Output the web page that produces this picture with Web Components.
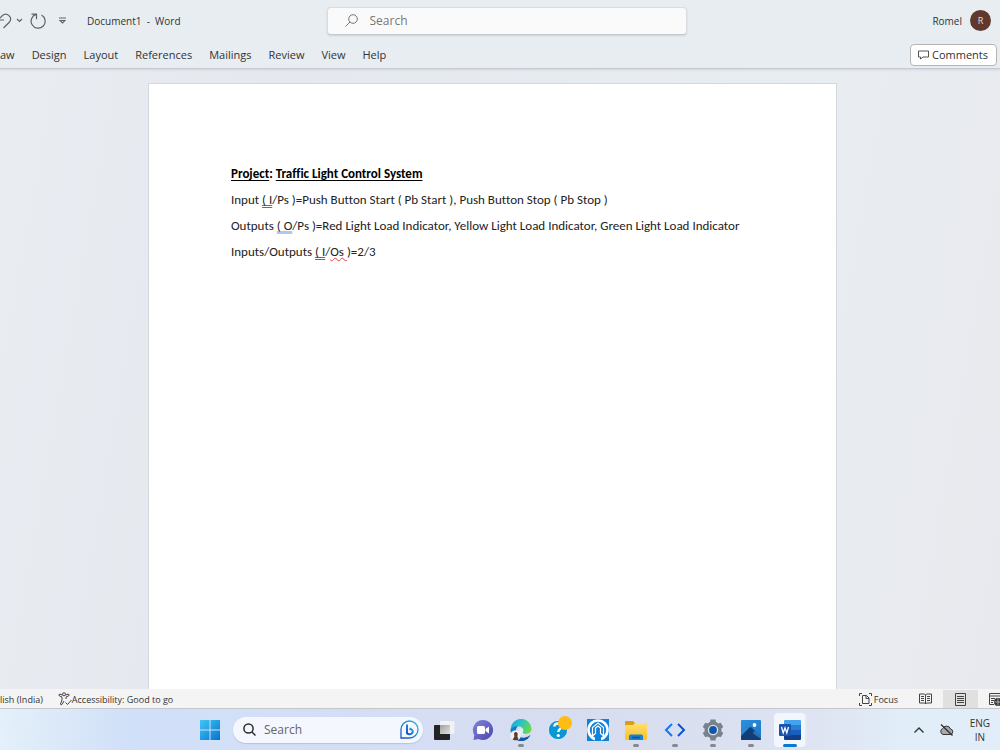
<!DOCTYPE html>
<html lang="en">
<head>
<meta charset="utf-8">
<title>Document1 - Word</title>
<style>
  * { box-sizing: border-box; }
  body {
    margin: 0;
    height: 100vh;
    display: flex;
    flex-direction: column;
    overflow: hidden;
    font-family: "Open Sans", "Noto Sans", sans-serif;
    font-size: 11px;
    color: #333;
    background: #e8ecf1;
  }
  word-workspace { flex: 1; min-height: 0; }
</style>
</head>
<body>

<word-titlebar user="Romel">Document1&nbsp; -&nbsp; Word</word-titlebar>

<word-ribbon>
  <ribbon-tab>aw</ribbon-tab>
  <ribbon-tab>Design</ribbon-tab>
  <ribbon-tab>Layout</ribbon-tab>
  <ribbon-tab>References</ribbon-tab>
  <ribbon-tab>Mailings</ribbon-tab>
  <ribbon-tab>Review</ribbon-tab>
  <ribbon-tab>View</ribbon-tab>
  <ribbon-tab>Help</ribbon-tab>
</word-ribbon>

<word-workspace>
  <doc-line heading><u>Project</u>: <u>Traffic Light Control System</u></doc-line>
  <doc-line>Input <doc-mark kind="grammar">( I</doc-mark>/Ps )=Push Button Start ( Pb Start ), Push Button Stop ( Pb Stop )</doc-line>
  <doc-line>Outputs <doc-mark kind="active">( O</doc-mark>/Ps )=Red Light Load Indicator, Yellow Light Load Indicator, Green Light Load Indicator</doc-line>
  <doc-line>Inputs/Outputs <doc-mark kind="grammar">( I</doc-mark>/<doc-mark kind="spelling">Os </doc-mark>)=2/3</doc-line>
</word-workspace>

<word-statusbar></word-statusbar>

<win-taskbar>
  <task-app label="Task view">
    <svg width="22" height="22" viewBox="0 0 22 22"><defs><linearGradient id="tv" x1="0" y1="0" x2="1" y2="1"><stop offset="0" stop-color="#9f9f9f"/><stop offset="1" stop-color="#e2e2e2"/></linearGradient></defs><rect x="1" y="6" width="16" height="15" rx="1" fill="#242424"/><path d="M7 2h13.500q1 0 1 1v11q0 1-1 1H7z" fill="#f2f2f2"/><path d="M7 6h10v9H7z" fill="url(#tv)"/></svg>
  </task-app>
  <task-app label="Chat">
    <svg width="22" height="22" viewBox="0 0 22 22"><defs><linearGradient id="ch" x1="0" y1="0" x2="1" y2="1"><stop offset="0" stop-color="#8385dc"/><stop offset="1" stop-color="#4d46ad"/></linearGradient></defs><path d="M11 1a10 10 0 1 1-4.500 18.900L1.500 21l.8-5A10 10 0 0 1 11 1z" fill="url(#ch)"/><rect x="5" y="7" width="8" height="8" rx="1.500" fill="#fff"/><path d="M13.500 10 17 7.500v7L13.500 12z" fill="#fff"/></svg>
  </task-app>
  <task-app label="Microsoft Edge" running>
    <svg width="22" height="22" viewBox="0 0 22 22"><defs><linearGradient id="e1" x1="0" y1="0" x2="1" y2=".4"><stop offset="0" stop-color="#1f9de5"/><stop offset=".5" stop-color="#2ac3c6"/><stop offset="1" stop-color="#65d950"/></linearGradient><linearGradient id="e2" x1="0" y1="0" x2="1" y2="1"><stop offset="0" stop-color="#1686d2"/><stop offset="1" stop-color="#114a95"/></linearGradient></defs><path d="M.6 10A10.500 10.500 0 0 1 21.500 9c.5 4-2.500 6-6 6-2.500 0-3.500-1-2.500-2.200C14.500 10 12 7.500 8.500 7.500 4.500 7.500 1.500 9 .6 12z" fill="url(#e1)"/><path d="M.6 11C1 8 5 6.500 8 7.500c-3 2-3 8 2 10.500 3.500 1.500 7 .5 9.500-1.500.6-.4 1 0 .6.600A10.500 10.500 0 0 1 .6 11z" fill="url(#e2)"/><path d="M10 9.500c2 0 3.500 1.300 2.700 3.200-.5 1.300 0 2.300 2.800 2.300-1 1.500-3.500 1.500-5 0s-1.800-4-.5-5.500z" fill="#e7edf8"/><circle cx="5.500" cy="16.500" r="5.300" fill="#f2eeeb"/><path d="M4 14.500q1.800-2.800 3.700 0l-.3 3 1.200 3q-3 1.700-6 0l1.800-2.800z" fill="#593d34"/></svg>
  </task-app>
  <task-app label="Get help">
    <svg width="28" height="30" viewBox="-2 0 28 30"><circle cx="11" cy="15" r="9.700" fill="#0b96d7" stroke="#e3eefa"/><path d="M7.300 11.500q.2-3 3.700-3t3.700 2.800c0 2.800-3.300 2.500-3.400 5.700" fill="none" stroke="#fff" stroke-width="2.300"/><circle cx="11.300" cy="20.500" r="1.600" fill="#fff"/><circle cx="18" cy="8" r="7" fill="#ffbc13"/></svg>
  </task-app>
  <task-app label="Quick Assist">
    <svg width="22" height="22" viewBox="0 0 22 22"><path d="M0 0h22v22H0z" fill="#1281d8"/><circle cx="11" cy="11" r="9.500" fill="none" stroke="#fff" stroke-width="2.600"/><path d="M5.500 17V8.500L11 4l5.500 4.500V17l-3-2.500V9L11 7 8.500 9v5.500z" fill="none" stroke="#fff" stroke-width="1.200"/><path d="M8 18h6v4H8z" fill="#1281d8"/></svg>
  </task-app>
  <task-app label="File Explorer" running>
    <svg width="22" height="22" viewBox="0 0 22 22"><defs><linearGradient id="fo" x1="0" y1="0" x2="0" y2="1"><stop offset="0" stop-color="#ffe074"/><stop offset="1" stop-color="#f9bf25"/></linearGradient></defs><path d="M1 2h7l2 2h11q1 0 1 1v6H0V3q0-1 1-1z" fill="#dc9d12"/><path d="M1 6h7l2-2h11q1 0 1 1v14q0 2-1 2H1q-1 0-1-2V7q0-1 1-1z" fill="url(#fo)"/><path d="M4 21v-4q0-1.500 1.500-1.500h11q1.500 0 1.500 1.500v4z" fill="#1583d0"/><path d="M7 18.500h8" stroke="#0b5292" stroke-width="1.500"/></svg>
  </task-app>
  <task-app label="Dev tool" running>
    <svg width="22" height="22" viewBox="0 0 22 22" fill="none" stroke="#1576f0" stroke-width="2"><path d="M8 5 2 11l6 6"/><path d="m14 5 6 6-6 6" stroke="#0755dc"/></svg>
  </task-app>
  <task-app label="Settings" running>
    <svg width="22" height="22" viewBox="0 0 22 22"><g fill="#77828b"><circle cx="11" cy="11" r="8.500"/><path id="tooth" d="M8.500.6h5l.7 4H7.800zM8.500 21.400h5l.7-4H7.800z"/><use href="#tooth" transform="rotate(60 11 11)"/><use href="#tooth" transform="rotate(120 11 11)"/></g><circle cx="11" cy="11" r="5.200" fill="#dce3eb"/><circle cx="11" cy="11" r="3.900" fill="#0f58a8"/></svg>
  </task-app>
  <task-app label="Photos" running>
    <svg width="22" height="22" viewBox="0 0 22 22"><defs><linearGradient id="ph" x1="0" y1="0" x2="1" y2="1"><stop offset="0" stop-color="#2b91dc"/><stop offset="1" stop-color="#1e76c8"/></linearGradient></defs><rect x="1" y="1" width="20" height="20" rx="1" fill="url(#ph)"/><path d="M1 17 9.500 8.500q1-1 2 0L21 18v2q0 1-1 1H2q-1 0-1-1z" fill="#113e76"/><path d="m12.500 14 2.500-2.200 6 5.800v2.500L12.500 14z" fill="#2970b7"/><circle cx="14.500" cy="6" r="1.900" fill="#fff"/></svg>
  </task-app>
  <task-app label="Word" running active>
    <svg width="22" height="22" viewBox="0 0 22 22"><path d="M5 2q0-1 1-1h15q1 0 1 1v4H5z" fill="#42a4ed"/><path d="M5 6h17v5H5z" fill="#2b7dd4"/><path d="M5 11h17v5H5z" fill="#1b5fbd"/><path d="M5 16h17v4q0 1-1 1H6q-1 0-1-1z" fill="#113f8b"/><rect y="5" width="12" height="12" rx="1" fill="#1855b0"/><path d="m2.500 8 1.700 6L6 9l1.800 5 1.700-6" fill="none" stroke="#fff" stroke-width="1.300"/></svg>
  </task-app>
</win-taskbar>

<script>
  const base = `
    * { box-sizing: border-box; }
    button, input { font: inherit; color: inherit; border: 0; margin: 0; padding: 0; background: none; }
    svg { display: block; flex: none; }
  `;

  class BaseElement extends HTMLElement {
    constructor() {
      super();
      this.attachShadow({ mode: 'open' });
    }

    connectedCallback() {
      this.shadowRoot.innerHTML = `<style>${base}${this.styles()}</style>${this.markup()}`;
    }
  }

  class WordTitlebar extends BaseElement {
    styles() {
      return `
        :host {
          display: grid;
          grid-template-columns: minmax(0, 1fr) minmax(0, 360px) minmax(0, 1fr);
          column-gap: 7px;
          align-items: center;
          height: 41px;
          padding-left: 13px;
          background: #e8edf1;
          font-size: 10px;
        }
        .left, .right { display: flex; align-items: center; }
        .left { margin-left: -13px; }
        .tools { display: flex; align-items: center; color: #606366; }
        .tools button { display: flex; }
        .undo { width: 12px; justify-content: flex-end; }
        .drop { width: 15px; justify-content: center; }
        .redo { width: 22px; justify-content: center; }
        .more { width: 26px; justify-content: center; }
        .title { margin-left: 12px; white-space: nowrap; }
        .search {
          display: flex;
          align-items: center;
          gap: 12px;
          height: 28px;
          padding-left: 17px;
          background: #fafafa;
          border: 1px solid #d9dce0;
          border-bottom-color: #c6c9cc;
          border-radius: 4px;
          box-shadow: 0 1px 2px rgba(0, 0, 0, 0.12);
          color: #777;
        }
        .search input { flex: 1; min-width: 0; outline: 0; font-size: 12px; }
        .search input::placeholder { color: #777; opacity: 1; }
        .right { justify-content: flex-end; gap: 8px; padding-right: 9px; }
        .avatar {
          width: 21px;
          height: 21px;
          border-radius: 50%;
          background: #5f392e;
          color: #eadfdc;
          font-size: 9px;
          line-height: 21px;
          text-align: center;
        }
      `;
    }

    markup() {
      const user = this.getAttribute('user');
      return `
        <div class="left">
          <div class="tools">
            <button class="undo" aria-label="Undo"><svg width="16" height="16" viewBox="0 0 16 16" fill="none" stroke="currentColor" stroke-width="1.200"><path d="M2 1v6h6M2.500 6.500l4-4a4.800 4.800 0 0 1 7 6.500L7.500 15"/></svg></button>
            <button class="drop" aria-label="Undo list"><svg width="7" height="5" viewBox="0 0 7 5" fill="none" stroke="currentColor" stroke-width="1.200"><path d="m1 1 2.500 2.500L6 1"/></svg></button>
            <button class="redo" aria-label="Repeat"><svg width="16" height="16" viewBox="0 0 16 16" fill="none" stroke="currentColor" stroke-width="1.200"><path d="M1.500 1.200h5v5M6.300 1.400A7 7 0 1 0 11.500 2"/></svg></button>
            <button class="more" aria-label="Customize toolbar"><svg width="7" height="8" viewBox="0 0 7 8" fill="none" stroke="currentColor" stroke-width="1.200"><path d="M0 1h7M1 3.500h5L3.500 6z"/></svg></button>
          </div>
          <span class="title"><slot></slot></span>
        </div>
        <label class="search">
          <svg width="13" height="13" viewBox="0 0 13 13" fill="none" stroke="currentColor"><circle cx="8" cy="5" r="4.300"/><path d="M5 8 .5 12.500"/></svg>
          <input type="search" placeholder="Search" aria-label="Search">
        </label>
        <div class="right"><span>${user}</span><span class="avatar">${user[0]}</span></div>
      `;
    }
  }

  class WordRibbon extends BaseElement {
    styles() {
      return `
        :host {
          display: flex;
          align-items: center;
          justify-content: space-between;
          height: 28px;
          padding-right: 3px;
          background: #e8edf1;
          border-bottom: 1px solid #c5c9d0;
          box-shadow: 0 1px 2px rgba(70, 80, 110, 0.14);
          position: relative;
        }
        nav { display: flex; gap: 17px; }
        .comments {
          display: flex;
          align-items: center;
          gap: 3px;
          height: 22px;
          padding: 0 8px 0 7px;
          background: #fff;
          border: 1px solid #b5b5b5;
          border-radius: 4px;
        }
      `;
    }

    markup() {
      return `
        <nav><slot></slot></nav>
        <button class="comments"><svg width="11" height="10" viewBox="0 0 11 10" fill="none" stroke="#555"><path d="M.5 1h10v6H5L2.500 9V7h-2z"/></svg>Comments</button>
      `;
    }
  }

  class RibbonTab extends BaseElement {
    styles() {
      return `
        :host { display: block; }
        button { display: block; line-height: 24px; }
      `;
    }

    markup() {
      return '<button><slot></slot></button>';
    }
  }

  class WordWorkspace extends BaseElement {
    styles() {
      return `
        :host {
          display: flex;
          justify-content: center;
          padding: 14px 15px 0 0;
          overflow: hidden;
          background: linear-gradient(100deg, #e9edf2, #e5e9ef 25%, #e8edf1 75%, #e8e9ee);
        }
        article {
          flex: 0 1 689px;
          padding: 77px 82px;
          background: #fff;
          border: 1px solid #d3d8dd;
          border-bottom: 0;
        }
      `;
    }

    markup() {
      return '<article><slot></slot></article>';
    }
  }

  class DocLine extends BaseElement {
    styles() {
      return `
        :host {
          display: block;
          font: 13px/26px Carlito, Lato, sans-serif;
          font-variant-ligatures: none;
          color: #222;
          white-space: nowrap;
        }
        :host([heading]) { font-weight: bold; color: #000; }
        ::slotted(u) { text-underline-offset: 2px; text-decoration-skip-ink: none; }
      `;
    }

    markup() {
      return '<slot></slot>';
    }
  }

  // proofing marks under a run of text
  class DocMark extends BaseElement {
    styles() {
      return `
        :host { white-space: pre; text-underline-offset: 1px; text-decoration-skip-ink: none; }
        :host([kind="grammar"]) { text-decoration: underline double #2f74ee 1px; }
        :host([kind="active"]) { text-decoration: underline #a9caf3 3px; }
        :host([kind="spelling"]) { text-decoration: underline wavy #eb3b3b 1px; }
      `;
    }

    markup() {
      return '<slot></slot>';
    }
  }

  class WordStatusbar extends BaseElement {
    styles() {
      return `
        :host {
          display: flex;
          justify-content: space-between;
          height: 20px;
          padding-top: 1px;
          background: #f4f4f4;
          border-bottom: 1px solid #c5c7cb;
          font-size: 9px;
          overflow: hidden;
        }
        div, button { display: flex; align-items: center; white-space: nowrap; }
        .left { gap: 15px; }
        .focus { gap: 2px; margin-right: 10px; }
        .view { width: 35px; height: 100%; justify-content: center; }
        .on { background: #e0e0e0; }
        .web { width: 22px; padding-left: 11px; justify-content: flex-start; overflow: hidden; }
      `;
    }

    markup() {
      return `
        <div class="left">
          <button>lish (India)</button>
          <button><svg width="14" height="14" viewBox="0 0 14 14" fill="none" stroke="#444"><circle cx="6" cy="2.300" r="1.500"/><path d="M4.500 3 1.500 2Q.3 3 1.500 4l2.500 1v3l-1.500 4q.5 1.500 1.500.5L6 9M7.500 3l3-1q1.300 1 0 2L8 5v2M7.500 10.500l2 2 4-4.500"/></svg>Accessibility: Good to go</button>
        </div>
        <div class="right">
          <button class="focus"><svg width="13" height="13" viewBox="0 0 13 13" fill="none" stroke="#444"><path d="M3 .5H.5V3M10 .5h2.500V3M.5 10v2.500H3M12.500 10v2.500H10M3.500 2.500h4l2.500 2.500v5.500H3.500zM7 2.500V5.500h3"/></svg>Focus</button>
          <button class="view" aria-label="Read mode"><svg width="13" height="12" viewBox="0 0 13 12" fill="none" stroke="#444"><path d="M.5 1h5l1 1 1-1h5v9h-5l-1 1-1-1h-5zM6.500 2v9M2 3.500h3M2 5.500h3M2 7.500h3M8 3.500h3M8 5.500h3M8 7.500h3"/></svg></button>
          <button class="view on" aria-label="Print layout"><svg width="11" height="13" viewBox="0 0 11 13" fill="none" stroke="#444"><path d="M.5.5h10v12H.5zM2 3.500h7M2 5.500h7M2 7.500h7M2 9.500h7"/></svg></button>
          <button class="view web" aria-label="Web layout"><svg width="13" height="13" viewBox="0 0 13 13" fill="none" stroke="#444"><path d="M5 11.500H.5V.5h12v5M.5 3h12M2 5.500h4M2 7.500h3M2 9.500h2"/><circle cx="9" cy="9" r="3.700" fill="#333"/><path d="M5.500 9h7M9 5.500v7" stroke="#ddd" stroke-width=".7"/></svg></button>
        </div>
      `;
    }
  }

  class WinTaskbar extends BaseElement {
    styles() {
      return `
        :host {
          display: grid;
          grid-template-columns: minmax(0, 1fr) auto minmax(0, 1fr);
          align-items: center;
          height: 41px;
          background: linear-gradient(95deg, #e4f0fa, #d0e0f8 13%, #d3def6 35%, #d8ddef 62%, #dfe4f3 82%, #e1edf9 90%, #e1eef9);
        }
        .middle { grid-column: 2; display: flex; align-items: center; }
        .start { display: flex; width: 38px; justify-content: center; }
        .search {
          display: flex;
          align-items: center;
          gap: 8px;
          width: 190px;
          height: 26px;
          margin-left: 4px;
          padding: 0 4px 0 10px;
          border-radius: 13px;
          background: #f4f7fd;
          box-shadow: 0 1px 1px rgba(80, 90, 120, 0.2);
        }
        .search input { flex: 1; min-width: 0; outline: 0; font-size: 12px; }
        .search input::placeholder { color: #666; opacity: 1; }
        .apps { display: grid; grid-template-columns: repeat(10, 1fr); width: 384px; margin-left: 2px; }
        .tray { display: flex; align-items: center; justify-content: flex-end; padding-right: 10px; }
        .tray button { display: flex; }
        .cloud { margin: 0 16px 0 15px; }
        .tray .lang { display: block; text-align: center; font-size: 10px; line-height: 14px; }
      `;
    }

    markup() {
      return `
        <div class="middle">
          <button class="start" aria-label="Start"><svg width="22" height="22" viewBox="0 0 22 22"><defs><linearGradient id="w" x1="0" y1="0" x2="1" y2="1"><stop offset="0" stop-color="#43c7f4"/><stop offset="1" stop-color="#0673cf"/></linearGradient></defs><path d="M1 1h9.500v9.500H1zM11.500 1H21v9.500h-9.500zM1 11.500h9.500V21H1zM11.500 11.500H21V21h-9.500z" fill="url(#w)"/></svg></button>
          <label class="search">
            <svg width="13" height="13" viewBox="0 0 13 13" fill="none" stroke="#2c2c2c" stroke-width="1.500"><circle cx="5.500" cy="5.500" r="4.600"/><path d="m9 9 3.500 3.500"/></svg>
            <input type="search" placeholder="Search" aria-label="Search Windows">
            <svg width="19" height="19" viewBox="0 0 19 19" fill="none"><defs><linearGradient id="b" x1="0" y1="1" x2="1" y2="0"><stop offset="0" stop-color="#1751c7"/><stop offset="1" stop-color="#2fb6dd"/></linearGradient></defs><path d="M1 18V9.500A8.500 8.500 0 1 1 9.500 18z" stroke="url(#b)" stroke-width="1.300"/><path d="M7 4.500v8.700q2 1.700 4.500.4 2.300-1.800.5-3.800L9.500 8.500" stroke="url(#b)" stroke-width="2"/></svg>
          </label>
          <div class="apps"><slot></slot></div>
        </div>
        <div class="tray">
          <button aria-label="Show hidden icons"><svg width="10" height="6" viewBox="0 0 10 6" fill="none" stroke="#333" stroke-width="1.400"><path d="M.5 5.500 5 1l4.500 4.500"/></svg></button>
          <button class="cloud" aria-label="OneDrive"><svg width="15" height="12" viewBox="0 0 15 12" fill="#a9a9ab" stroke="#333"><path d="M4 10.500a3.200 3.200 0 0 1-.3-6A4.200 4.200 0 0 1 11.500 5 2.800 2.800 0 0 1 11.500 10.500z"/><path d="m2 .5 11.500 11" stroke-width="1.400"/></svg></button>
          <button class="lang">ENG<br>IN</button>
        </div>
      `;
    }
  }

  class TaskApp extends BaseElement {
    styles() {
      return `
        :host { display: block; position: relative; }
        button { display: flex; align-items: center; justify-content: center; width: 100%; height: 34px; border-radius: 4px; }
        :host([active]) button { width: 31px; margin: 0 auto; background: #f3f6fc; box-shadow: 2px 0 0 #e4e9f5; }
        :host([running])::after {
          content: "";
          position: absolute;
          left: 50%;
          bottom: 0;
          width: 6px;
          height: 3px;
          border-radius: 2px;
          background: #85898f;
          transform: translateX(-50%);
        }
        :host([active])::after { width: 14px; background: #0878d1; }
      `;
    }

    markup() {
      return `<button aria-label="${this.getAttribute('label')}"><slot></slot></button>`;
    }
  }

  customElements.define('word-titlebar', WordTitlebar);
  customElements.define('word-ribbon', WordRibbon);
  customElements.define('ribbon-tab', RibbonTab);
  customElements.define('word-workspace', WordWorkspace);
  customElements.define('doc-line', DocLine);
  customElements.define('doc-mark', DocMark);
  customElements.define('word-statusbar', WordStatusbar);
  customElements.define('win-taskbar', WinTaskbar);
  customElements.define('task-app', TaskApp);
</script>
</body>
</html>
